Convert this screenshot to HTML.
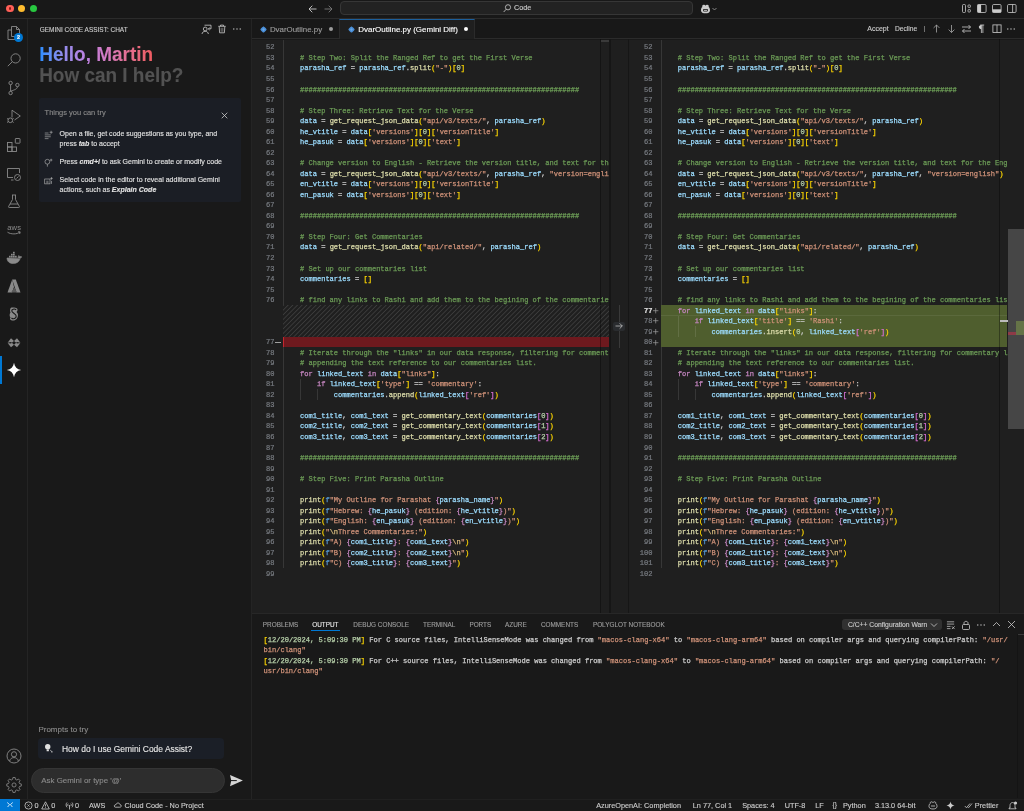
<!DOCTYPE html><html><head><meta charset="utf-8"><style>
*{box-sizing:border-box;margin:0;padding:0}
html,body{width:1024px;height:811px;overflow:hidden;background:#181818}
body{position:relative;font-family:"Liberation Sans",sans-serif;color:#cccccc}
.a{position:absolute}
.mono{font-family:"Liberation Mono",monospace}
.row{position:absolute;white-space:pre;-webkit-text-stroke-width:0.25px;font-family:"Liberation Mono",monospace;font-size:7.05px;line-height:10.53px;height:10.53px}
.ln{position:absolute;white-space:pre;-webkit-text-stroke-width:0.2px;font-family:"Liberation Mono",monospace;font-size:7.05px;line-height:10.53px;color:#6e7681;text-align:right}
.t{position:absolute;white-space:pre;line-height:1;-webkit-text-stroke-width:0.12px}
#root{position:absolute;left:0;top:0;width:1024px;height:811px;will-change:transform;background:#181818}
svg{position:absolute;overflow:visible}
</style></head><body><div id="root"><div class="a" style="left:0;top:0;width:1024px;height:19px;background:#181818;border-bottom:1px solid #2b2b2b"></div><div class="a" style="left:6.4px;top:5.1px;width:7.2px;height:7.2px;border-radius:50%;background:#ff5f57"></div><div class="a" style="left:18.099999999999998px;top:5.1px;width:7.2px;height:7.2px;border-radius:50%;background:#febc2e"></div><div class="a" style="left:29.9px;top:5.1px;width:7.2px;height:7.2px;border-radius:50%;background:#28c840"></div><div class="a" style="left:8.7px;top:7.4px;width:2.6px;height:2.6px;border-radius:50%;background:#8c1d18"></div><svg style="left:308px;top:4.5px" width="9" height="8" viewBox="0 0 9 8"><path d="M8.5 4H1M4.3 0.7L1 4l3.3 3.3" fill="none" stroke="#cccccc" stroke-width="0.9"/></svg><svg style="left:323.5px;top:4.5px" width="9" height="8" viewBox="0 0 9 8"><path d="M0.5 4H8M4.7 0.7L8 4 4.7 7.3" fill="none" stroke="#7a7a7a" stroke-width="0.9"/></svg><div class="a" style="left:340px;top:1.2px;width:352.5px;height:14px;border:1px solid #363636;border-radius:4px;background:#222222"></div><svg style="left:503px;top:3.8px" width="8" height="9" viewBox="0 0 8 9"><circle cx="5" cy="3.3" r="2.6" fill="none" stroke="#bbbbbb" stroke-width="0.9"/><path d="M3.2 5.2L0.7 8" stroke="#bbbbbb" stroke-width="0.9"/></svg><div class="t" style="left:514px;top:4.2px;font-size:7.2px;color:#cccccc">Code</div><svg style="left:699.5px;top:3.5px" width="11" height="10" viewBox="0 0 11 10"><path d="M1 6.5C1 4.5 1.5 3.5 2.3 3 2 1.5 2.8 0.6 4 0.8 4.8 0.9 5.3 1.3 5.5 1.8 5.7 1.3 6.2 0.9 7 0.8 8.2 0.6 9 1.5 8.7 3 9.5 3.5 10 4.5 10 6.5 10 8.5 8 9.3 5.5 9.3 3 9.3 1 8.5 1 6.5Z" fill="#cccccc"/><rect x="3" y="5" width="5" height="2.6" rx="1" fill="#181818"/><rect x="3.8" y="5.8" width="3.4" height="1" fill="#cccccc"/></svg><svg style="left:712px;top:6.5px" width="5" height="4" viewBox="0 0 5 4"><path d="M0.5 1L2.5 3 4.5 1" fill="none" stroke="#9d9d9d" stroke-width="0.8"/></svg><svg style="left:961.5px;top:4px" width="10" height="9" viewBox="0 0 10 9"><rect x="0.5" y="0.5" width="3" height="8" rx="1" fill="none" stroke="#cccccc" stroke-width="0.8"/><rect x="6" y="1" width="2.4" height="2.4" rx="0.6" fill="none" stroke="#cccccc" stroke-width="0.8"/><rect x="6" y="5.6" width="2.4" height="2.4" rx="0.6" fill="none" stroke="#cccccc" stroke-width="0.8"/></svg><svg style="left:976.5px;top:4px" width="10" height="9" viewBox="0 0 10 9"><rect x="0.5" y="0.5" width="8.6" height="8" rx="1.2" fill="none" stroke="#cccccc" stroke-width="0.8"/><rect x="0.5" y="0.5" width="3.6" height="8" fill="#cccccc"/></svg><svg style="left:991.8px;top:4px" width="10" height="9" viewBox="0 0 10 9"><rect x="0.5" y="0.5" width="8.6" height="8" rx="1.2" fill="none" stroke="#cccccc" stroke-width="0.8"/><rect x="0.5" y="5.3" width="8.6" height="3.2" fill="#cccccc"/></svg><svg style="left:1006.8px;top:4px" width="10" height="9" viewBox="0 0 10 9"><rect x="0.5" y="0.5" width="8.6" height="8" rx="1.2" fill="none" stroke="#cccccc" stroke-width="0.8"/><path d="M5.6 0.5V8.5" stroke="#cccccc" stroke-width="0.8"/></svg><div class="a" style="left:0;top:19px;width:28px;height:780px;background:#191919;border-right:1px solid #242424"></div><svg style="left:6.0px;top:25.0px" width="16" height="16" viewBox="0 0 16 16"><path d="M5.5 1.5H10.5L13.5 4.5V11.5H5.5Z" fill="none" stroke="#8a8a8a" stroke-width="0.9"/><path d="M10.5 1.5V4.5H13.5" fill="none" stroke="#8a8a8a" stroke-width="0.9"/><path d="M5.5 5H2V14.5H10V11.5" fill="none" stroke="#8a8a8a" stroke-width="0.9"/></svg><div class="a" style="left:14px;top:33px;width:9.4px;height:9.4px;border-radius:50%;background:#0078d4"></div><div class="t" style="left:17px;top:35.2px;font-size:5.5px;color:#fff;font-weight:700">2</div><svg style="left:6.0px;top:52.0px" width="16" height="16" viewBox="0 0 16 16"><circle cx="9.6" cy="6.4" r="4.6" fill="none" stroke="#8a8a8a" stroke-width="0.9"/><path d="M6.3 9.7L1.8 14.2" fill="none" stroke="#8a8a8a" stroke-width="0.9"/></svg><svg style="left:6.0px;top:80.0px" width="16" height="16" viewBox="0 0 16 16"><circle cx="4.6" cy="3" r="1.7" fill="none" stroke="#8a8a8a" stroke-width="0.9"/><circle cx="4.6" cy="13" r="1.7" fill="none" stroke="#8a8a8a" stroke-width="0.9"/><circle cx="11.4" cy="5" r="1.7" fill="none" stroke="#8a8a8a" stroke-width="0.9"/><path d="M4.6 4.7V11.3M11.4 6.7C11.4 9 9 9.6 4.6 11.3" fill="none" stroke="#8a8a8a" stroke-width="0.9"/></svg><svg style="left:6.0px;top:108.0px" width="16" height="16" viewBox="0 0 16 16"><path d="M6 9.5V2.2L14.3 8 8.5 12" fill="none" stroke="#8a8a8a" stroke-width="0.9"/><circle cx="4.3" cy="12.3" r="2.3" fill="none" stroke="#8a8a8a" stroke-width="0.9"/><path d="M1 10.5L2.4 11.3M1 14.5L2.4 13.5M7.6 10.5L6.2 11.3M7.6 14.5L6.2 13.5" fill="none" stroke="#8a8a8a" stroke-width="0.9"/></svg><svg style="left:6.0px;top:137.0px" width="16" height="16" viewBox="0 0 16 16"><rect x="1.5" y="5.5" width="4.5" height="4.5" fill="none" stroke="#8a8a8a" stroke-width="0.9"/><rect x="1.5" y="10" width="4.5" height="4.5" fill="none" stroke="#8a8a8a" stroke-width="0.9"/><rect x="6" y="10" width="4.5" height="4.5" fill="none" stroke="#8a8a8a" stroke-width="0.9"/><rect x="9.3" y="1.5" width="4.7" height="4.7" rx="0.5" fill="none" stroke="#8a8a8a" stroke-width="0.9"/></svg><svg style="left:6.0px;top:166.0px" width="16" height="16" viewBox="0 0 16 16"><path d="M13.5 7V2.5H1.5V11.5H7" fill="none" stroke="#8a8a8a" stroke-width="0.9"/><path d="M5 14H7.5" fill="none" stroke="#8a8a8a" stroke-width="0.9"/><circle cx="11.5" cy="11.5" r="3" fill="none" stroke="#8a8a8a" stroke-width="0.9"/><path d="M10.5 12.5L12.5 10.5" fill="none" stroke="#8a8a8a" stroke-width="0.9"/></svg><svg style="left:6.0px;top:193.0px" width="16" height="16" viewBox="0 0 16 16"><path d="M6 2H10M6.5 2V6.5L2.6 13.5C2.3 14 2.6 14.5 3.2 14.5H12.8C13.4 14.5 13.7 14 13.4 13.5L9.5 6.5V2" fill="none" stroke="#8a8a8a" stroke-width="0.9"/><path d="M4 11H12" fill="none" stroke="#8a8a8a" stroke-width="0.9"/></svg><div class="t" style="left:7.3px;top:223.6px;font-size:7.6px;color:#8a8a8a;letter-spacing:0.1px;-webkit-text-stroke-width:0">aws</div><svg style="left:6.0px;top:231.0px" width="16" height="4" viewBox="0 0 16 4"><path d="M1.5 1.2C5 3.5 11 3.5 14 1" fill="none" stroke="#8a8a8a" stroke-width="0.9"/><path d="M12 0.8L14.2 0.9 13.6 3" fill="none" stroke="#8a8a8a" stroke-width="0.9"/></svg><svg style="left:6.0px;top:250.0px" width="16" height="16" viewBox="0 0 16 16"><path d="M1 8H14.5C14.5 8 15.5 7.2 15.8 7 15 6.3 14 6.5 13.6 6.8 13.3 6 12.8 5.5 12.8 5.5L12.3 6.2C12.5 6.8 12.5 7.5 12.3 8M1 8C1 11.5 3.5 13.5 7.3 13.5 11 13.5 13.3 11.5 14.2 8.5" fill="#8a8a8a" stroke="#8a8a8a" stroke-width="0.6"/><rect x="3" y="5.8" width="1.7" height="1.7" fill="#8a8a8a"/><rect x="5" y="5.8" width="1.7" height="1.7" fill="#8a8a8a"/><rect x="7" y="5.8" width="1.7" height="1.7" fill="#8a8a8a"/><rect x="9" y="5.8" width="1.7" height="1.7" fill="#8a8a8a"/><rect x="5" y="3.8" width="1.7" height="1.7" fill="#8a8a8a"/><rect x="7" y="3.8" width="1.7" height="1.7" fill="#8a8a8a"/><rect x="7" y="1.8" width="1.7" height="1.7" fill="#8a8a8a"/></svg><svg style="left:6.0px;top:278.0px" width="16" height="16" viewBox="0 0 16 16"><path d="M6.2 1.5H9.8L14.5 14.5H10.5Z" fill="#8a8a8a"/><path d="M6.2 1.5L1.5 14.5H6L8 9Z" fill="#8a8a8a"/><path d="M8.5 9.5L11 14.5H5" fill="#5a5a5a"/></svg><svg style="left:6.0px;top:306.0px" width="16" height="16" viewBox="0 0 16 16"><path d="M5.5 1.5C7 1.2 10 1.5 11 2.5 12 3.5 11.5 5 10.5 6 12 7 12.5 9 11.5 11.5 10.5 14 8 14.8 6 14.5 4 14.2 3.5 12.5 4.5 11.5 3.5 10.5 3.2 8 4.5 6.5 3.8 5.3 3.8 2 5.5 1.5Z" fill="#8a8a8a"/><path d="M10.2 3.8C8.5 2.5 5.5 3 5.8 5 6.1 7 10 7.5 10.2 10 10.4 12.5 7 13.5 5.5 12" fill="none" stroke="#181818" stroke-width="1.1"/></svg><svg style="left:6.0px;top:334.5px" width="16" height="16" viewBox="0 0 16 16"><path d="M5 3.3L8 5.9 5 8.5 1.4 7.9Z M11 3.3L14.6 7.9 11 8.5 8 5.9Z M5 12.3L8 9.7 5 7.1 1.4 7.7Z M11 12.3L14.6 7.7 11 7.1 8 9.7Z" fill="#8a8a8a"/></svg><div class="a" style="left:0;top:356.4px;width:1.8px;height:27.7px;background:#0078d4"></div><svg style="left:6.0px;top:362.2px" width="16" height="16" viewBox="0 0 16 16"><path d="M8 0.8C8.6 5 11 7.4 15.2 8 11 8.6 8.6 11 8 15.2 7.4 11 5 8.6 0.8 8 5 7.4 7.4 5 8 0.8Z" fill="#ffffff"/></svg><svg style="left:6.0px;top:748.2px" width="16" height="16" viewBox="0 0 16 16"><circle cx="8" cy="8" r="7" fill="none" stroke="#8a8a8a" stroke-width="0.9"/><circle cx="8" cy="6.3" r="2.6" fill="none" stroke="#8a8a8a" stroke-width="0.9"/><path d="M3.6 13C4.3 10.5 6 9.6 8 9.6 10 9.6 11.7 10.5 12.4 13" fill="none" stroke="#8a8a8a" stroke-width="0.9"/></svg><svg style="left:6.0px;top:776.6px" width="16" height="16" viewBox="0 0 16 16"><g transform="translate(0.6 -0.4) scale(0.93)"><path d="M6.8 1H9.2L9.6 3 11 3.7 12.8 2.6 14.4 4.3 13.3 6 13.9 7.5 15.8 7.9V10.2L13.9 10.6 13.3 12.1 14.4 13.8 12.8 15.4 11 14.3 9.6 15 9.2 17H6.8L6.4 15 5 14.3 3.2 15.4 1.6 13.8 2.7 12.1 2.1 10.6 0.2 10.2V7.9L2.1 7.5 2.7 6 1.6 4.3 3.2 2.6 5 3.7 6.4 3Z" fill="none" stroke="#8a8a8a" stroke-width="0.9"/><circle cx="8" cy="9" r="2.2" fill="none" stroke="#8a8a8a" stroke-width="0.9"/></g></svg><div class="a" style="left:28px;top:19px;width:224px;height:780px;background:#191919;border-right:1px solid #242424"></div><div class="t" style="left:39.7px;top:26.6px;font-size:6.47px;color:#cccccc">GEMINI CODE ASSIST: CHAT</div><svg style="left:200px;top:23px" width="14" height="12" viewBox="200 23 14 12"><circle cx="205.2" cy="29" r="1.9" fill="none" stroke="#cccccc" stroke-width="0.8"/><path d="M202 34C202.3 32.2 203.5 31.3 205.2 31.3 206.9 31.3 208.1 32.2 208.4 34" fill="none" stroke="#cccccc" stroke-width="0.8"/><path d="M204.5 25.2H211V28.8H209" fill="none" stroke="#cccccc" stroke-width="0.8"/><path d="M209.6 27.7L208.2 28.9 209.6 30" fill="none" stroke="#cccccc" stroke-width="0.8"/></svg><svg style="left:217px;top:23px" width="10" height="12" viewBox="217 23 10 12"><path d="M218.3 26.3H225.7M220.5 26.2V25.1H223.5V26.2" fill="none" stroke="#cccccc" stroke-width="0.8"/><path d="M219.2 26.5L219.6 32.8H224.4L224.8 26.5" fill="none" stroke="#cccccc" stroke-width="0.8"/><path d="M221.2 27.8V31.8M222.8 27.8V31.8" stroke="#9a9a9a" stroke-width="0.7"/></svg><svg style="left:232.3px;top:28.2px" width="10" height="2" viewBox="0 0 10 2"><circle cx="1.8" cy="1" r="0.65" fill="#cccccc"/><circle cx="5" cy="1" r="0.65" fill="#cccccc"/><circle cx="8.2" cy="1" r="0.65" fill="#cccccc"/></svg><div class="t" style="left:39.2px;top:44.9px;font-size:19px;font-weight:700;background:linear-gradient(90deg,#2a8cff 0%,#5a90f8 9%,#8e8cec 20%,#b086e6 34%,#c47fdc 46%,#d57abf 60%,#e1729e 72%,#e86a80 85%,#f05a5e 100%);-webkit-background-clip:text;background-clip:text;color:transparent;width:115px;transform:scaleY(1.07);transform-origin:0 73%">Hello, Martin</div><div class="t" style="left:39.2px;top:66.6px;font-size:18.95px;font-weight:700;color:#525252;transform:scaleY(1.05);transform-origin:0 73%">How can I help?</div><div class="a" style="left:38.5px;top:98px;width:202.5px;height:103.6px;background:#1b1e25;border-radius:2px"></div><div class="t" style="left:44.6px;top:109px;font-size:7.48px;color:#8a8a8a">Things you can try</div><svg style="left:220.5px;top:112px" width="7" height="7" viewBox="0 0 7 7"><path d="M0.7 0.7L6.3 6.3M6.3 0.7L0.7 6.3" stroke="#cccccc" stroke-width="0.8"/></svg><div class="t" style="left:59.6px;top:129.8px;font-size:7.03px;color:#e2e2e2;transform:scaleY(1.14);transform-origin:0 73%">Open a file, get code suggestions as you type, and</div><div class="t" style="left:59.6px;top:140.4px;font-size:7.03px;color:#e2e2e2;transform:scaleY(1.14);transform-origin:0 73%">press <b><i>tab</i></b> to accept</div><div class="t" style="left:59.6px;top:157.8px;font-size:7.03px;color:#e2e2e2;transform:scaleY(1.14);transform-origin:0 73%">Press <b><i>cmd+i</i></b> to ask Gemini to create or modify code</div><div class="t" style="left:59.6px;top:175.5px;font-size:7.03px;color:#e2e2e2;transform:scaleY(1.14);transform-origin:0 73%">Select code in the editor to reveal additional Gemini</div><div class="t" style="left:59.6px;top:186.1px;font-size:7.03px;color:#e2e2e2;transform:scaleY(1.14);transform-origin:0 73%">actions, such as <b><i>Explain Code</i></b></div><svg style="left:44.2px;top:129.5px" width="9" height="9" viewBox="0 0 12 12"><path d="M1 4H6M1 6.5H9M1 9H9M1 11.5H6" fill="none" stroke="#bbbbbb" stroke-width="0.8"/><path d="M9.5 1V5M7.5 3H11.5" fill="none" stroke="#bbbbbb" stroke-width="0.8"/></svg><svg style="left:44.2px;top:157.5px" width="9" height="9" viewBox="0 0 12 12"><circle cx="4.5" cy="5" r="3.2" fill="none" stroke="#bbbbbb" stroke-width="0.8"/><path d="M4.5 8.2V11.5" fill="none" stroke="#bbbbbb" stroke-width="0.8"/><path d="M9.5 1V4.5M7.8 2.7H11.2" fill="none" stroke="#bbbbbb" stroke-width="0.8"/></svg><svg style="left:44.2px;top:175.5px" width="9" height="9" viewBox="0 0 12 12"><rect x="1" y="4" width="7" height="6.5" fill="none" stroke="#bbbbbb" stroke-width="0.8"/><path d="M3 7H6M3 9H6" fill="none" stroke="#bbbbbb" stroke-width="0.8"/><path d="M10 1.5V5M8.3 3.2H11.7M10 6.5V10.5" fill="none" stroke="#bbbbbb" stroke-width="0.8"/></svg><div class="t" style="left:38.4px;top:726.1px;font-size:8.03px;color:#8a8a8a">Prompts to try</div><div class="a" style="left:38.4px;top:738.4px;width:185.6px;height:20.9px;background:#1b1f27;border-radius:4px"></div><svg style="left:44.0px;top:743.1px" width="9" height="9" viewBox="0 0 12 12"><circle cx="5" cy="5" r="3.6" fill="#e0e0e0"/><path d="M3.5 8.5V11H6.5V8.5" fill="#e0e0e0"/><path d="M8 9L11 12M9.5 12H11.5" stroke="#e0e0e0" stroke-width="0.9"/></svg><div class="t" style="left:62px;top:744.9px;font-size:8.46px;color:#e6e6e6">How do I use Gemini Code Assist?</div><div class="a" style="left:31px;top:767.6px;width:193.8px;height:25.4px;background:#2d2d2d;border:1px solid #353535;border-radius:13px"></div><div class="t" style="left:41.3px;top:776.6px;font-size:7.92px;color:#8a8a8a">Ask Gemini or type '@'</div><svg style="left:228px;top:773px" width="16" height="15" viewBox="228 773 16 15"><path d="M230 775L242.9 780.6 230 786.3 231.3 780.6Z" fill="#d6d6d6"/><path d="M230.5 780.6H236.8" stroke="#191919" stroke-width="1"/></svg><div class="a" style="left:252px;top:19px;width:772px;height:20px;background:#181818;border-bottom:1px solid #2b2b2b"></div><div class="a" style="left:339px;top:19px;width:135.5px;height:20px;background:#1f1f1f;border-top:1px solid #1c5f9c;border-right:1px solid #2b2b2b;border-left:1px solid #2b2b2b"></div><svg style="left:259.5px;top:25.5px" width="7" height="7" viewBox="0 0 7 7"><path d="M3.5 0.4C4.2 0.4 6.6 2.8 6.6 3.5 6.6 4.2 4.2 6.6 3.5 6.6 2.8 6.6 0.4 4.2 0.4 3.5 0.4 2.8 2.8 0.4 3.5 0.4Z" fill="#4a8fd8"/><path d="M2.2 3.6H4.8M3.5 2.3V4.9" stroke="#6aa8e8" stroke-width="0.9"/></svg><div class="t" style="left:269.9px;top:25.8px;font-size:7.9px;color:#9d9d9d">DvarOutline.py</div><div class="a" style="left:328.6px;top:26.8px;width:4.6px;height:4.6px;border-radius:50%;background:#9d9d9d"></div><svg style="left:347.5px;top:25.5px" width="7" height="7" viewBox="0 0 7 7"><path d="M3.5 0.4C4.2 0.4 6.6 2.8 6.6 3.5 6.6 4.2 4.2 6.6 3.5 6.6 2.8 6.6 0.4 4.2 0.4 3.5 0.4 2.8 2.8 0.4 3.5 0.4Z" fill="#4a8fd8"/><path d="M2.2 3.6H4.8M3.5 2.3V4.9" stroke="#6aa8e8" stroke-width="0.9"/></svg><div class="t" style="left:358.3px;top:25.8px;font-size:7.98px;color:#ffffff">DvarOutline.py (Gemini Diff)</div><div class="a" style="left:463.7px;top:26.8px;width:4.6px;height:4.6px;border-radius:50%;background:#ffffff"></div><div class="t" style="left:867.2px;top:24.9px;font-size:7.06px;color:#cccccc">Accept</div><div class="t" style="left:894.9px;top:25.5px;font-size:6.7px;color:#cccccc">Decline</div><div class="a" style="left:923.7px;top:26.3px;width:1px;height:5.8px;background:#707070"></div><svg style="left:931.5px;top:24.2px" width="9" height="10" viewBox="0 0 9 10"><path d="M4.5 8.5V1M1.6 3.9L4.5 1 7.4 3.9" fill="none" stroke="#a8a8a8" stroke-width="0.8"/></svg><svg style="left:946.7px;top:24.2px" width="9" height="10" viewBox="0 0 9 10"><path d="M4.5 1V8.5M1.6 5.6L4.5 8.5 7.4 5.6" fill="none" stroke="#a8a8a8" stroke-width="0.8"/></svg><svg style="left:960.5px;top:24.2px" width="11" height="10" viewBox="0 0 11 10"><path d="M1 3H9.5M7.5 1L9.5 3 7.5 5M10 7H1.5M3.5 5L1.5 7 3.5 9" fill="none" stroke="#cccccc" stroke-width="0.8"/></svg><svg style="left:975.8px;top:24.0px" width="9" height="10" viewBox="0 0 9 10"><path d="M4.2 1H8.2M5.4 1V9M6.9 1V9" fill="none" stroke="#cccccc" stroke-width="0.8"/><path d="M5.4 1C2 1 2 5.2 5.4 5.2Z" fill="#cccccc"/></svg><svg style="left:992.0px;top:24.3px" width="10" height="9.4" viewBox="0 0 10 9.4"><rect x="0.9" y="0.9" width="8.2" height="7.6" fill="none" stroke="#cccccc" stroke-width="0.8"/><path d="M5 0.9V8.5" stroke="#cccccc" stroke-width="0.8"/></svg><svg style="left:1006.3px;top:28.4px" width="10" height="2" viewBox="0 0 10 2"><circle cx="1.8" cy="1" r="0.65" fill="#cccccc"/><circle cx="5" cy="1" r="0.65" fill="#cccccc"/><circle cx="8.2" cy="1" r="0.65" fill="#cccccc"/></svg><div class="a" style="left:252px;top:39px;width:772px;height:574px;background:#1f1f1f"></div><div class="a" style="left:252px;top:39px;width:357.20000000000005px;height:574px;overflow:hidden"><svg style="left:31.100000000000023px;top:265.75px" width="326.10" height="31.89"><defs><pattern id="hp" width="3.3" height="3.3" patternUnits="userSpaceOnUse" patternTransform="rotate(45)"><rect width="0.85" height="3.3" fill="#3d3d3d"/></pattern></defs><rect width="326.10" height="31.89" fill="url(#hp)"/></svg><div class="a" style="left:31.100000000000023px;top:297.64px;width:326.1px;height:10.58px;background:#6e191e;border-left:1px solid #c4262e"></div><div class="a" style="left:31.30px;top:-0.36px;width:0.8px;height:266.41px;background:rgba(255,255,255,0.11)"></div><div class="a" style="left:31.30px;top:308.17px;width:0.8px;height:221.13px;background:rgba(255,255,255,0.11)"></div><div class="a" style="left:48.20px;top:339.76px;width:0.8px;height:21.06px;background:rgba(255,255,255,0.11)"></div><div class="a" style="left:65.10px;top:350.29px;width:0.8px;height:10.53px;background:rgba(255,255,255,0.11)"></div><div class="ln" style="left:-7.5px;top:3.40px;width:30px;color:#787c82;">52</div><div class="ln" style="left:-7.5px;top:13.93px;width:30px;color:#787c82;">53</div><div class="row" style="left:31.100000000000023px;top:13.93px;width:325.80px;overflow:hidden;">    <span style="color:#6A9955"># Step Two: Split the Ranged Ref to get the First Verse</span></div><div class="ln" style="left:-7.5px;top:24.46px;width:30px;color:#787c82;">54</div><div class="row" style="left:31.100000000000023px;top:24.46px;width:325.80px;overflow:hidden;">    <span style="color:#9CDCFE">parasha_ref</span> <span style="color:#CCCCCC">=</span> <span style="color:#9CDCFE">parasha_ref</span><span style="color:#CCCCCC">.</span><span style="color:#DCDCAA">split</span><span style="color:#FFD700">(</span><span style="color:#CE9178">&quot;-&quot;</span><span style="color:#FFD700">)</span><span style="color:#FFD700">[</span><span style="color:#B5CEA8">0</span><span style="color:#FFD700">]</span></div><div class="ln" style="left:-7.5px;top:34.99px;width:30px;color:#787c82;">55</div><div class="ln" style="left:-7.5px;top:45.52px;width:30px;color:#787c82;">56</div><div class="row" style="left:31.100000000000023px;top:45.52px;width:325.80px;overflow:hidden;">    <span style="color:#6A9955">##################################################################</span></div><div class="ln" style="left:-7.5px;top:56.05px;width:30px;color:#787c82;">57</div><div class="ln" style="left:-7.5px;top:66.58px;width:30px;color:#787c82;">58</div><div class="row" style="left:31.100000000000023px;top:66.58px;width:325.80px;overflow:hidden;">    <span style="color:#6A9955"># Step Three: Retrieve Text for the Verse</span></div><div class="ln" style="left:-7.5px;top:77.11px;width:30px;color:#787c82;">59</div><div class="row" style="left:31.100000000000023px;top:77.11px;width:325.80px;overflow:hidden;">    <span style="color:#9CDCFE">data</span> <span style="color:#CCCCCC">=</span> <span style="color:#DCDCAA">get_request_json_data</span><span style="color:#FFD700">(</span><span style="color:#CE9178">&quot;api/v3/texts/&quot;</span><span style="color:#CCCCCC">,</span> <span style="color:#9CDCFE">parasha_ref</span><span style="color:#FFD700">)</span></div><div class="ln" style="left:-7.5px;top:87.64px;width:30px;color:#787c82;">60</div><div class="row" style="left:31.100000000000023px;top:87.64px;width:325.80px;overflow:hidden;">    <span style="color:#9CDCFE">he_vtitle</span> <span style="color:#CCCCCC">=</span> <span style="color:#9CDCFE">data</span><span style="color:#FFD700">[</span><span style="color:#CE9178">&#x27;versions&#x27;</span><span style="color:#FFD700">]</span><span style="color:#FFD700">[</span><span style="color:#B5CEA8">0</span><span style="color:#FFD700">]</span><span style="color:#FFD700">[</span><span style="color:#CE9178">&#x27;versionTitle&#x27;</span><span style="color:#FFD700">]</span></div><div class="ln" style="left:-7.5px;top:98.17px;width:30px;color:#787c82;">61</div><div class="row" style="left:31.100000000000023px;top:98.17px;width:325.80px;overflow:hidden;">    <span style="color:#9CDCFE">he_pasuk</span> <span style="color:#CCCCCC">=</span> <span style="color:#9CDCFE">data</span><span style="color:#FFD700">[</span><span style="color:#CE9178">&#x27;versions&#x27;</span><span style="color:#FFD700">]</span><span style="color:#FFD700">[</span><span style="color:#B5CEA8">0</span><span style="color:#FFD700">]</span><span style="color:#FFD700">[</span><span style="color:#CE9178">&#x27;text&#x27;</span><span style="color:#FFD700">]</span></div><div class="ln" style="left:-7.5px;top:108.70px;width:30px;color:#787c82;">62</div><div class="ln" style="left:-7.5px;top:119.23px;width:30px;color:#787c82;">63</div><div class="row" style="left:31.100000000000023px;top:119.23px;width:325.80px;overflow:hidden;">    <span style="color:#6A9955"># Change version to English - Retrieve the version title, and text for the English version</span></div><div class="ln" style="left:-7.5px;top:129.76px;width:30px;color:#787c82;">64</div><div class="row" style="left:31.100000000000023px;top:129.76px;width:325.80px;overflow:hidden;">    <span style="color:#9CDCFE">data</span> <span style="color:#CCCCCC">=</span> <span style="color:#DCDCAA">get_request_json_data</span><span style="color:#FFD700">(</span><span style="color:#CE9178">&quot;api/v3/texts/&quot;</span><span style="color:#CCCCCC">,</span> <span style="color:#9CDCFE">parasha_ref</span><span style="color:#CCCCCC">,</span> <span style="color:#CE9178">&quot;version=english&quot;</span><span style="color:#FFD700">)</span></div><div class="ln" style="left:-7.5px;top:140.29px;width:30px;color:#787c82;">65</div><div class="row" style="left:31.100000000000023px;top:140.29px;width:325.80px;overflow:hidden;">    <span style="color:#9CDCFE">en_vtitle</span> <span style="color:#CCCCCC">=</span> <span style="color:#9CDCFE">data</span><span style="color:#FFD700">[</span><span style="color:#CE9178">&#x27;versions&#x27;</span><span style="color:#FFD700">]</span><span style="color:#FFD700">[</span><span style="color:#B5CEA8">0</span><span style="color:#FFD700">]</span><span style="color:#FFD700">[</span><span style="color:#CE9178">&#x27;versionTitle&#x27;</span><span style="color:#FFD700">]</span></div><div class="ln" style="left:-7.5px;top:150.82px;width:30px;color:#787c82;">66</div><div class="row" style="left:31.100000000000023px;top:150.82px;width:325.80px;overflow:hidden;">    <span style="color:#9CDCFE">en_pasuk</span> <span style="color:#CCCCCC">=</span> <span style="color:#9CDCFE">data</span><span style="color:#FFD700">[</span><span style="color:#CE9178">&#x27;versions&#x27;</span><span style="color:#FFD700">]</span><span style="color:#FFD700">[</span><span style="color:#B5CEA8">0</span><span style="color:#FFD700">]</span><span style="color:#FFD700">[</span><span style="color:#CE9178">&#x27;text&#x27;</span><span style="color:#FFD700">]</span></div><div class="ln" style="left:-7.5px;top:161.35px;width:30px;color:#787c82;">67</div><div class="ln" style="left:-7.5px;top:171.88px;width:30px;color:#787c82;">68</div><div class="row" style="left:31.100000000000023px;top:171.88px;width:325.80px;overflow:hidden;">    <span style="color:#6A9955">##################################################################</span></div><div class="ln" style="left:-7.5px;top:182.41px;width:30px;color:#787c82;">69</div><div class="ln" style="left:-7.5px;top:192.94px;width:30px;color:#787c82;">70</div><div class="row" style="left:31.100000000000023px;top:192.94px;width:325.80px;overflow:hidden;">    <span style="color:#6A9955"># Step Four: Get Commentaries</span></div><div class="ln" style="left:-7.5px;top:203.47px;width:30px;color:#787c82;">71</div><div class="row" style="left:31.100000000000023px;top:203.47px;width:325.80px;overflow:hidden;">    <span style="color:#9CDCFE">data</span> <span style="color:#CCCCCC">=</span> <span style="color:#DCDCAA">get_request_json_data</span><span style="color:#FFD700">(</span><span style="color:#CE9178">&quot;api/related/&quot;</span><span style="color:#CCCCCC">,</span> <span style="color:#9CDCFE">parasha_ref</span><span style="color:#FFD700">)</span></div><div class="ln" style="left:-7.5px;top:214.00px;width:30px;color:#787c82;">72</div><div class="ln" style="left:-7.5px;top:224.53px;width:30px;color:#787c82;">73</div><div class="row" style="left:31.100000000000023px;top:224.53px;width:325.80px;overflow:hidden;">    <span style="color:#6A9955"># Set up our commentaries list</span></div><div class="ln" style="left:-7.5px;top:235.06px;width:30px;color:#787c82;">74</div><div class="row" style="left:31.100000000000023px;top:235.06px;width:325.80px;overflow:hidden;">    <span style="color:#9CDCFE">commentaries</span> <span style="color:#CCCCCC">=</span> <span style="color:#FFD700">[</span><span style="color:#FFD700">]</span></div><div class="ln" style="left:-7.5px;top:245.59px;width:30px;color:#787c82;">75</div><div class="ln" style="left:-7.5px;top:256.12px;width:30px;color:#787c82;">76</div><div class="row" style="left:31.100000000000023px;top:256.12px;width:325.80px;overflow:hidden;">    <span style="color:#6A9955"># find any links to Rashi and add them to the begining of the commentaries list</span></div><div class="ln" style="left:-7.5px;top:298.24px;width:30px;color:#787c82;">77</div><div class="a" style="left:23.3px;top:302.94px;width:5.8px;height:0.8px;background:#a0a0a0"></div><div class="ln" style="left:-7.5px;top:308.77px;width:30px;color:#787c82;">78</div><div class="row" style="left:31.100000000000023px;top:308.77px;width:325.80px;overflow:hidden;">    <span style="color:#6A9955"># Iterate through the &quot;links&quot; in our data response, filtering for commentary links and</span></div><div class="ln" style="left:-7.5px;top:319.30px;width:30px;color:#787c82;">79</div><div class="row" style="left:31.100000000000023px;top:319.30px;width:325.80px;overflow:hidden;">    <span style="color:#6A9955"># appending the text reference to our commentaries list.</span></div><div class="ln" style="left:-7.5px;top:329.83px;width:30px;color:#787c82;">80</div><div class="row" style="left:31.100000000000023px;top:329.83px;width:325.80px;overflow:hidden;">    <span style="color:#C586C0">for</span> <span style="color:#9CDCFE">linked_text</span> <span style="color:#C586C0">in</span> <span style="color:#9CDCFE">data</span><span style="color:#FFD700">[</span><span style="color:#CE9178">&quot;links&quot;</span><span style="color:#FFD700">]</span><span style="color:#CCCCCC">:</span></div><div class="ln" style="left:-7.5px;top:340.36px;width:30px;color:#787c82;">81</div><div class="row" style="left:31.100000000000023px;top:340.36px;width:325.80px;overflow:hidden;">        <span style="color:#C586C0">if</span> <span style="color:#9CDCFE">linked_text</span><span style="color:#FFD700">[</span><span style="color:#CE9178">&#x27;type&#x27;</span><span style="color:#FFD700">]</span> <span style="color:#CCCCCC">=</span><span style="color:#CCCCCC">=</span> <span style="color:#CE9178">&#x27;commentary&#x27;</span><span style="color:#CCCCCC">:</span></div><div class="ln" style="left:-7.5px;top:350.89px;width:30px;color:#787c82;">82</div><div class="row" style="left:31.100000000000023px;top:350.89px;width:325.80px;overflow:hidden;">            <span style="color:#9CDCFE">commentaries</span><span style="color:#CCCCCC">.</span><span style="color:#DCDCAA">append</span><span style="color:#FFD700">(</span><span style="color:#9CDCFE">linked_text</span><span style="color:#DA70D6">[</span><span style="color:#CE9178">&#x27;ref&#x27;</span><span style="color:#DA70D6">]</span><span style="color:#FFD700">)</span></div><div class="ln" style="left:-7.5px;top:361.42px;width:30px;color:#787c82;">83</div><div class="ln" style="left:-7.5px;top:371.95px;width:30px;color:#787c82;">84</div><div class="row" style="left:31.100000000000023px;top:371.95px;width:325.80px;overflow:hidden;">    <span style="color:#9CDCFE">com1_title</span><span style="color:#CCCCCC">,</span> <span style="color:#9CDCFE">com1_text</span> <span style="color:#CCCCCC">=</span> <span style="color:#DCDCAA">get_commentary_text</span><span style="color:#FFD700">(</span><span style="color:#9CDCFE">commentaries</span><span style="color:#DA70D6">[</span><span style="color:#B5CEA8">0</span><span style="color:#DA70D6">]</span><span style="color:#FFD700">)</span></div><div class="ln" style="left:-7.5px;top:382.48px;width:30px;color:#787c82;">85</div><div class="row" style="left:31.100000000000023px;top:382.48px;width:325.80px;overflow:hidden;">    <span style="color:#9CDCFE">com2_title</span><span style="color:#CCCCCC">,</span> <span style="color:#9CDCFE">com2_text</span> <span style="color:#CCCCCC">=</span> <span style="color:#DCDCAA">get_commentary_text</span><span style="color:#FFD700">(</span><span style="color:#9CDCFE">commentaries</span><span style="color:#DA70D6">[</span><span style="color:#B5CEA8">1</span><span style="color:#DA70D6">]</span><span style="color:#FFD700">)</span></div><div class="ln" style="left:-7.5px;top:393.01px;width:30px;color:#787c82;">86</div><div class="row" style="left:31.100000000000023px;top:393.01px;width:325.80px;overflow:hidden;">    <span style="color:#9CDCFE">com3_title</span><span style="color:#CCCCCC">,</span> <span style="color:#9CDCFE">com3_text</span> <span style="color:#CCCCCC">=</span> <span style="color:#DCDCAA">get_commentary_text</span><span style="color:#FFD700">(</span><span style="color:#9CDCFE">commentaries</span><span style="color:#DA70D6">[</span><span style="color:#B5CEA8">2</span><span style="color:#DA70D6">]</span><span style="color:#FFD700">)</span></div><div class="ln" style="left:-7.5px;top:403.54px;width:30px;color:#787c82;">87</div><div class="ln" style="left:-7.5px;top:414.07px;width:30px;color:#787c82;">88</div><div class="row" style="left:31.100000000000023px;top:414.07px;width:325.80px;overflow:hidden;">    <span style="color:#6A9955">##################################################################</span></div><div class="ln" style="left:-7.5px;top:424.60px;width:30px;color:#787c82;">89</div><div class="ln" style="left:-7.5px;top:435.13px;width:30px;color:#787c82;">90</div><div class="row" style="left:31.100000000000023px;top:435.13px;width:325.80px;overflow:hidden;">    <span style="color:#6A9955"># Step Five: Print Parasha Outline</span></div><div class="ln" style="left:-7.5px;top:445.66px;width:30px;color:#787c82;">91</div><div class="ln" style="left:-7.5px;top:456.19px;width:30px;color:#787c82;">92</div><div class="row" style="left:31.100000000000023px;top:456.19px;width:325.80px;overflow:hidden;">    <span style="color:#DCDCAA">print</span><span style="color:#FFD700">(</span><span style="color:#569CD6">f</span><span style="color:#CE9178">&quot;My Outline for Parashat </span><span style="color:#C586C0">{</span><span style="color:#9CDCFE">parasha_name</span><span style="color:#C586C0">}</span><span style="color:#CE9178">&quot;</span><span style="color:#FFD700">)</span></div><div class="ln" style="left:-7.5px;top:466.72px;width:30px;color:#787c82;">93</div><div class="row" style="left:31.100000000000023px;top:466.72px;width:325.80px;overflow:hidden;">    <span style="color:#DCDCAA">print</span><span style="color:#FFD700">(</span><span style="color:#569CD6">f</span><span style="color:#CE9178">&quot;Hebrew: </span><span style="color:#C586C0">{</span><span style="color:#9CDCFE">he_pasuk</span><span style="color:#C586C0">}</span><span style="color:#CE9178"> (edition: </span><span style="color:#C586C0">{</span><span style="color:#9CDCFE">he_vtitle</span><span style="color:#C586C0">}</span><span style="color:#CE9178">)&quot;</span><span style="color:#FFD700">)</span></div><div class="ln" style="left:-7.5px;top:477.25px;width:30px;color:#787c82;">94</div><div class="row" style="left:31.100000000000023px;top:477.25px;width:325.80px;overflow:hidden;">    <span style="color:#DCDCAA">print</span><span style="color:#FFD700">(</span><span style="color:#569CD6">f</span><span style="color:#CE9178">&quot;English: </span><span style="color:#C586C0">{</span><span style="color:#9CDCFE">en_pasuk</span><span style="color:#C586C0">}</span><span style="color:#CE9178"> (edition: </span><span style="color:#C586C0">{</span><span style="color:#9CDCFE">en_vtitle</span><span style="color:#C586C0">}</span><span style="color:#CE9178">)&quot;</span><span style="color:#FFD700">)</span></div><div class="ln" style="left:-7.5px;top:487.78px;width:30px;color:#787c82;">95</div><div class="row" style="left:31.100000000000023px;top:487.78px;width:325.80px;overflow:hidden;">    <span style="color:#DCDCAA">print</span><span style="color:#FFD700">(</span><span style="color:#CE9178">&quot;</span><span style="color:#D7BA7D">\n</span><span style="color:#CE9178">Three Commentaries:&quot;</span><span style="color:#FFD700">)</span></div><div class="ln" style="left:-7.5px;top:498.31px;width:30px;color:#787c82;">96</div><div class="row" style="left:31.100000000000023px;top:498.31px;width:325.80px;overflow:hidden;">    <span style="color:#DCDCAA">print</span><span style="color:#FFD700">(</span><span style="color:#569CD6">f</span><span style="color:#CE9178">&quot;A) </span><span style="color:#C586C0">{</span><span style="color:#9CDCFE">com1_title</span><span style="color:#C586C0">}</span><span style="color:#CE9178">: </span><span style="color:#C586C0">{</span><span style="color:#9CDCFE">com1_text</span><span style="color:#C586C0">}</span><span style="color:#D7BA7D">\n</span><span style="color:#CE9178">&quot;</span><span style="color:#FFD700">)</span></div><div class="ln" style="left:-7.5px;top:508.84px;width:30px;color:#787c82;">97</div><div class="row" style="left:31.100000000000023px;top:508.84px;width:325.80px;overflow:hidden;">    <span style="color:#DCDCAA">print</span><span style="color:#FFD700">(</span><span style="color:#569CD6">f</span><span style="color:#CE9178">&quot;B) </span><span style="color:#C586C0">{</span><span style="color:#9CDCFE">com2_title</span><span style="color:#C586C0">}</span><span style="color:#CE9178">: </span><span style="color:#C586C0">{</span><span style="color:#9CDCFE">com2_text</span><span style="color:#C586C0">}</span><span style="color:#D7BA7D">\n</span><span style="color:#CE9178">&quot;</span><span style="color:#FFD700">)</span></div><div class="ln" style="left:-7.5px;top:519.37px;width:30px;color:#787c82;">98</div><div class="row" style="left:31.100000000000023px;top:519.37px;width:325.80px;overflow:hidden;">    <span style="color:#DCDCAA">print</span><span style="color:#FFD700">(</span><span style="color:#569CD6">f</span><span style="color:#CE9178">&quot;C) </span><span style="color:#C586C0">{</span><span style="color:#9CDCFE">com3_title</span><span style="color:#C586C0">}</span><span style="color:#CE9178">: </span><span style="color:#C586C0">{</span><span style="color:#9CDCFE">com3_text</span><span style="color:#C586C0">}</span><span style="color:#CE9178">&quot;</span><span style="color:#FFD700">)</span></div><div class="ln" style="left:-7.5px;top:529.90px;width:30px;color:#787c82;">99</div></div><div class="a" style="left:629px;top:39px;width:378.5px;height:574px;overflow:hidden"><div class="a" style="left:31.799999999999955px;top:266.05px;width:346.70000000000005px;height:10.58px;background:#4f5e2e"></div><div class="a" style="left:31.799999999999955px;top:276.58px;width:346.70000000000005px;height:10.58px;background:#4f5e2e"></div><div class="a" style="left:31.799999999999955px;top:287.11px;width:346.70000000000005px;height:10.58px;background:#4f5e2e"></div><div class="a" style="left:31.799999999999955px;top:297.64px;width:346.70000000000005px;height:10.58px;background:#4f5e2e"></div><div class="a" style="left:31.799999999999955px;top:276.08px;width:346.70000000000005px;height:0.8px;background:rgba(255,255,255,0.07)"></div><div class="a" style="left:32.20px;top:-0.36px;width:0.8px;height:266.41px;background:rgba(255,255,255,0.11)"></div><div class="a" style="left:32.20px;top:308.17px;width:0.8px;height:221.13px;background:rgba(255,255,255,0.11)"></div><div class="a" style="left:49.10px;top:276.58px;width:0.8px;height:21.06px;background:rgba(255,255,255,0.11)"></div><div class="a" style="left:66.00px;top:287.11px;width:0.8px;height:10.53px;background:rgba(255,255,255,0.11)"></div><div class="a" style="left:49.10px;top:339.76px;width:0.8px;height:21.06px;background:rgba(255,255,255,0.11)"></div><div class="a" style="left:66.00px;top:350.29px;width:0.8px;height:10.53px;background:rgba(255,255,255,0.11)"></div><div class="ln" style="left:-6.5px;top:3.40px;width:30px;color:#787c82;">52</div><div class="ln" style="left:-6.5px;top:13.93px;width:30px;color:#787c82;">53</div><div class="row" style="left:31.799999999999955px;top:13.93px;">    <span style="color:#6A9955"># Step Two: Split the Ranged Ref to get the First Verse</span></div><div class="ln" style="left:-6.5px;top:24.46px;width:30px;color:#787c82;">54</div><div class="row" style="left:31.799999999999955px;top:24.46px;">    <span style="color:#9CDCFE">parasha_ref</span> <span style="color:#CCCCCC">=</span> <span style="color:#9CDCFE">parasha_ref</span><span style="color:#CCCCCC">.</span><span style="color:#DCDCAA">split</span><span style="color:#FFD700">(</span><span style="color:#CE9178">&quot;-&quot;</span><span style="color:#FFD700">)</span><span style="color:#FFD700">[</span><span style="color:#B5CEA8">0</span><span style="color:#FFD700">]</span></div><div class="ln" style="left:-6.5px;top:34.99px;width:30px;color:#787c82;">55</div><div class="ln" style="left:-6.5px;top:45.52px;width:30px;color:#787c82;">56</div><div class="row" style="left:31.799999999999955px;top:45.52px;">    <span style="color:#6A9955">##################################################################</span></div><div class="ln" style="left:-6.5px;top:56.05px;width:30px;color:#787c82;">57</div><div class="ln" style="left:-6.5px;top:66.58px;width:30px;color:#787c82;">58</div><div class="row" style="left:31.799999999999955px;top:66.58px;">    <span style="color:#6A9955"># Step Three: Retrieve Text for the Verse</span></div><div class="ln" style="left:-6.5px;top:77.11px;width:30px;color:#787c82;">59</div><div class="row" style="left:31.799999999999955px;top:77.11px;">    <span style="color:#9CDCFE">data</span> <span style="color:#CCCCCC">=</span> <span style="color:#DCDCAA">get_request_json_data</span><span style="color:#FFD700">(</span><span style="color:#CE9178">&quot;api/v3/texts/&quot;</span><span style="color:#CCCCCC">,</span> <span style="color:#9CDCFE">parasha_ref</span><span style="color:#FFD700">)</span></div><div class="ln" style="left:-6.5px;top:87.64px;width:30px;color:#787c82;">60</div><div class="row" style="left:31.799999999999955px;top:87.64px;">    <span style="color:#9CDCFE">he_vtitle</span> <span style="color:#CCCCCC">=</span> <span style="color:#9CDCFE">data</span><span style="color:#FFD700">[</span><span style="color:#CE9178">&#x27;versions&#x27;</span><span style="color:#FFD700">]</span><span style="color:#FFD700">[</span><span style="color:#B5CEA8">0</span><span style="color:#FFD700">]</span><span style="color:#FFD700">[</span><span style="color:#CE9178">&#x27;versionTitle&#x27;</span><span style="color:#FFD700">]</span></div><div class="ln" style="left:-6.5px;top:98.17px;width:30px;color:#787c82;">61</div><div class="row" style="left:31.799999999999955px;top:98.17px;">    <span style="color:#9CDCFE">he_pasuk</span> <span style="color:#CCCCCC">=</span> <span style="color:#9CDCFE">data</span><span style="color:#FFD700">[</span><span style="color:#CE9178">&#x27;versions&#x27;</span><span style="color:#FFD700">]</span><span style="color:#FFD700">[</span><span style="color:#B5CEA8">0</span><span style="color:#FFD700">]</span><span style="color:#FFD700">[</span><span style="color:#CE9178">&#x27;text&#x27;</span><span style="color:#FFD700">]</span></div><div class="ln" style="left:-6.5px;top:108.70px;width:30px;color:#787c82;">62</div><div class="ln" style="left:-6.5px;top:119.23px;width:30px;color:#787c82;">63</div><div class="row" style="left:31.799999999999955px;top:119.23px;">    <span style="color:#6A9955"># Change version to English - Retrieve the version title, and text for the English version</span></div><div class="ln" style="left:-6.5px;top:129.76px;width:30px;color:#787c82;">64</div><div class="row" style="left:31.799999999999955px;top:129.76px;">    <span style="color:#9CDCFE">data</span> <span style="color:#CCCCCC">=</span> <span style="color:#DCDCAA">get_request_json_data</span><span style="color:#FFD700">(</span><span style="color:#CE9178">&quot;api/v3/texts/&quot;</span><span style="color:#CCCCCC">,</span> <span style="color:#9CDCFE">parasha_ref</span><span style="color:#CCCCCC">,</span> <span style="color:#CE9178">&quot;version=english&quot;</span><span style="color:#FFD700">)</span></div><div class="ln" style="left:-6.5px;top:140.29px;width:30px;color:#787c82;">65</div><div class="row" style="left:31.799999999999955px;top:140.29px;">    <span style="color:#9CDCFE">en_vtitle</span> <span style="color:#CCCCCC">=</span> <span style="color:#9CDCFE">data</span><span style="color:#FFD700">[</span><span style="color:#CE9178">&#x27;versions&#x27;</span><span style="color:#FFD700">]</span><span style="color:#FFD700">[</span><span style="color:#B5CEA8">0</span><span style="color:#FFD700">]</span><span style="color:#FFD700">[</span><span style="color:#CE9178">&#x27;versionTitle&#x27;</span><span style="color:#FFD700">]</span></div><div class="ln" style="left:-6.5px;top:150.82px;width:30px;color:#787c82;">66</div><div class="row" style="left:31.799999999999955px;top:150.82px;">    <span style="color:#9CDCFE">en_pasuk</span> <span style="color:#CCCCCC">=</span> <span style="color:#9CDCFE">data</span><span style="color:#FFD700">[</span><span style="color:#CE9178">&#x27;versions&#x27;</span><span style="color:#FFD700">]</span><span style="color:#FFD700">[</span><span style="color:#B5CEA8">0</span><span style="color:#FFD700">]</span><span style="color:#FFD700">[</span><span style="color:#CE9178">&#x27;text&#x27;</span><span style="color:#FFD700">]</span></div><div class="ln" style="left:-6.5px;top:161.35px;width:30px;color:#787c82;">67</div><div class="ln" style="left:-6.5px;top:171.88px;width:30px;color:#787c82;">68</div><div class="row" style="left:31.799999999999955px;top:171.88px;">    <span style="color:#6A9955">##################################################################</span></div><div class="ln" style="left:-6.5px;top:182.41px;width:30px;color:#787c82;">69</div><div class="ln" style="left:-6.5px;top:192.94px;width:30px;color:#787c82;">70</div><div class="row" style="left:31.799999999999955px;top:192.94px;">    <span style="color:#6A9955"># Step Four: Get Commentaries</span></div><div class="ln" style="left:-6.5px;top:203.47px;width:30px;color:#787c82;">71</div><div class="row" style="left:31.799999999999955px;top:203.47px;">    <span style="color:#9CDCFE">data</span> <span style="color:#CCCCCC">=</span> <span style="color:#DCDCAA">get_request_json_data</span><span style="color:#FFD700">(</span><span style="color:#CE9178">&quot;api/related/&quot;</span><span style="color:#CCCCCC">,</span> <span style="color:#9CDCFE">parasha_ref</span><span style="color:#FFD700">)</span></div><div class="ln" style="left:-6.5px;top:214.00px;width:30px;color:#787c82;">72</div><div class="ln" style="left:-6.5px;top:224.53px;width:30px;color:#787c82;">73</div><div class="row" style="left:31.799999999999955px;top:224.53px;">    <span style="color:#6A9955"># Set up our commentaries list</span></div><div class="ln" style="left:-6.5px;top:235.06px;width:30px;color:#787c82;">74</div><div class="row" style="left:31.799999999999955px;top:235.06px;">    <span style="color:#9CDCFE">commentaries</span> <span style="color:#CCCCCC">=</span> <span style="color:#FFD700">[</span><span style="color:#FFD700">]</span></div><div class="ln" style="left:-6.5px;top:245.59px;width:30px;color:#787c82;">75</div><div class="ln" style="left:-6.5px;top:256.12px;width:30px;color:#787c82;">76</div><div class="row" style="left:31.799999999999955px;top:256.12px;">    <span style="color:#6A9955"># find any links to Rashi and add them to the begining of the commentaries list</span></div><div class="ln" style="left:-6.5px;top:266.65px;width:30px;color:#e0e0e0;font-weight:700;">77</div><svg style="left:24.0px;top:268.95px" width="5.4" height="5.4" viewBox="0 0 5.4 5.4"><path d="M2.7 0V5.4M0 2.7H5.4" stroke="#a0a0a0" stroke-width="0.7"/></svg><div class="row" style="left:31.799999999999955px;top:266.65px;">    <span style="color:#C586C0">for</span> <span style="color:#9CDCFE">linked_text</span> <span style="color:#C586C0">in</span> <span style="color:#9CDCFE">data</span><span style="color:#FFD700">[</span><span style="color:#CE9178">&quot;links&quot;</span><span style="color:#FFD700">]</span><span style="color:#CCCCCC">:</span></div><div class="ln" style="left:-6.5px;top:277.18px;width:30px;color:#787c82;">78</div><svg style="left:24.0px;top:279.48px" width="5.4" height="5.4" viewBox="0 0 5.4 5.4"><path d="M2.7 0V5.4M0 2.7H5.4" stroke="#a0a0a0" stroke-width="0.7"/></svg><div class="row" style="left:31.799999999999955px;top:277.18px;">        <span style="color:#C586C0">if</span> <span style="color:#9CDCFE">linked_text</span><span style="color:#FFD700">[</span><span style="color:#CE9178">&#x27;title&#x27;</span><span style="color:#FFD700">]</span> <span style="color:#CCCCCC">=</span><span style="color:#CCCCCC">=</span> <span style="color:#CE9178">&#x27;Rashi&#x27;</span><span style="color:#CCCCCC">:</span></div><div class="ln" style="left:-6.5px;top:287.71px;width:30px;color:#787c82;">79</div><svg style="left:24.0px;top:290.01px" width="5.4" height="5.4" viewBox="0 0 5.4 5.4"><path d="M2.7 0V5.4M0 2.7H5.4" stroke="#a0a0a0" stroke-width="0.7"/></svg><div class="row" style="left:31.799999999999955px;top:287.71px;">            <span style="color:#9CDCFE">commentaries</span><span style="color:#CCCCCC">.</span><span style="color:#DCDCAA">insert</span><span style="color:#FFD700">(</span><span style="color:#B5CEA8">0</span><span style="color:#CCCCCC">,</span> <span style="color:#9CDCFE">linked_text</span><span style="color:#DA70D6">[</span><span style="color:#CE9178">&#x27;ref&#x27;</span><span style="color:#DA70D6">]</span><span style="color:#FFD700">)</span></div><div class="ln" style="left:-6.5px;top:298.24px;width:30px;color:#787c82;">80</div><svg style="left:24.0px;top:300.54px" width="5.4" height="5.4" viewBox="0 0 5.4 5.4"><path d="M2.7 0V5.4M0 2.7H5.4" stroke="#a0a0a0" stroke-width="0.7"/></svg><div class="ln" style="left:-6.5px;top:308.77px;width:30px;color:#787c82;">81</div><div class="row" style="left:31.799999999999955px;top:308.77px;">    <span style="color:#6A9955"># Iterate through the &quot;links&quot; in our data response, filtering for commentary links and</span></div><div class="ln" style="left:-6.5px;top:319.30px;width:30px;color:#787c82;">82</div><div class="row" style="left:31.799999999999955px;top:319.30px;">    <span style="color:#6A9955"># appending the text reference to our commentaries list.</span></div><div class="ln" style="left:-6.5px;top:329.83px;width:30px;color:#787c82;">83</div><div class="row" style="left:31.799999999999955px;top:329.83px;">    <span style="color:#C586C0">for</span> <span style="color:#9CDCFE">linked_text</span> <span style="color:#C586C0">in</span> <span style="color:#9CDCFE">data</span><span style="color:#FFD700">[</span><span style="color:#CE9178">&quot;links&quot;</span><span style="color:#FFD700">]</span><span style="color:#CCCCCC">:</span></div><div class="ln" style="left:-6.5px;top:340.36px;width:30px;color:#787c82;">84</div><div class="row" style="left:31.799999999999955px;top:340.36px;">        <span style="color:#C586C0">if</span> <span style="color:#9CDCFE">linked_text</span><span style="color:#FFD700">[</span><span style="color:#CE9178">&#x27;type&#x27;</span><span style="color:#FFD700">]</span> <span style="color:#CCCCCC">=</span><span style="color:#CCCCCC">=</span> <span style="color:#CE9178">&#x27;commentary&#x27;</span><span style="color:#CCCCCC">:</span></div><div class="ln" style="left:-6.5px;top:350.89px;width:30px;color:#787c82;">85</div><div class="row" style="left:31.799999999999955px;top:350.89px;">            <span style="color:#9CDCFE">commentaries</span><span style="color:#CCCCCC">.</span><span style="color:#DCDCAA">append</span><span style="color:#FFD700">(</span><span style="color:#9CDCFE">linked_text</span><span style="color:#DA70D6">[</span><span style="color:#CE9178">&#x27;ref&#x27;</span><span style="color:#DA70D6">]</span><span style="color:#FFD700">)</span></div><div class="ln" style="left:-6.5px;top:361.42px;width:30px;color:#787c82;">86</div><div class="ln" style="left:-6.5px;top:371.95px;width:30px;color:#787c82;">87</div><div class="row" style="left:31.799999999999955px;top:371.95px;">    <span style="color:#9CDCFE">com1_title</span><span style="color:#CCCCCC">,</span> <span style="color:#9CDCFE">com1_text</span> <span style="color:#CCCCCC">=</span> <span style="color:#DCDCAA">get_commentary_text</span><span style="color:#FFD700">(</span><span style="color:#9CDCFE">commentaries</span><span style="color:#DA70D6">[</span><span style="color:#B5CEA8">0</span><span style="color:#DA70D6">]</span><span style="color:#FFD700">)</span></div><div class="ln" style="left:-6.5px;top:382.48px;width:30px;color:#787c82;">88</div><div class="row" style="left:31.799999999999955px;top:382.48px;">    <span style="color:#9CDCFE">com2_title</span><span style="color:#CCCCCC">,</span> <span style="color:#9CDCFE">com2_text</span> <span style="color:#CCCCCC">=</span> <span style="color:#DCDCAA">get_commentary_text</span><span style="color:#FFD700">(</span><span style="color:#9CDCFE">commentaries</span><span style="color:#DA70D6">[</span><span style="color:#B5CEA8">1</span><span style="color:#DA70D6">]</span><span style="color:#FFD700">)</span></div><div class="ln" style="left:-6.5px;top:393.01px;width:30px;color:#787c82;">89</div><div class="row" style="left:31.799999999999955px;top:393.01px;">    <span style="color:#9CDCFE">com3_title</span><span style="color:#CCCCCC">,</span> <span style="color:#9CDCFE">com3_text</span> <span style="color:#CCCCCC">=</span> <span style="color:#DCDCAA">get_commentary_text</span><span style="color:#FFD700">(</span><span style="color:#9CDCFE">commentaries</span><span style="color:#DA70D6">[</span><span style="color:#B5CEA8">2</span><span style="color:#DA70D6">]</span><span style="color:#FFD700">)</span></div><div class="ln" style="left:-6.5px;top:403.54px;width:30px;color:#787c82;">90</div><div class="ln" style="left:-6.5px;top:414.07px;width:30px;color:#787c82;">91</div><div class="row" style="left:31.799999999999955px;top:414.07px;">    <span style="color:#6A9955">##################################################################</span></div><div class="ln" style="left:-6.5px;top:424.60px;width:30px;color:#787c82;">92</div><div class="ln" style="left:-6.5px;top:435.13px;width:30px;color:#787c82;">93</div><div class="row" style="left:31.799999999999955px;top:435.13px;">    <span style="color:#6A9955"># Step Five: Print Parasha Outline</span></div><div class="ln" style="left:-6.5px;top:445.66px;width:30px;color:#787c82;">94</div><div class="ln" style="left:-6.5px;top:456.19px;width:30px;color:#787c82;">95</div><div class="row" style="left:31.799999999999955px;top:456.19px;">    <span style="color:#DCDCAA">print</span><span style="color:#FFD700">(</span><span style="color:#569CD6">f</span><span style="color:#CE9178">&quot;My Outline for Parashat </span><span style="color:#C586C0">{</span><span style="color:#9CDCFE">parasha_name</span><span style="color:#C586C0">}</span><span style="color:#CE9178">&quot;</span><span style="color:#FFD700">)</span></div><div class="ln" style="left:-6.5px;top:466.72px;width:30px;color:#787c82;">96</div><div class="row" style="left:31.799999999999955px;top:466.72px;">    <span style="color:#DCDCAA">print</span><span style="color:#FFD700">(</span><span style="color:#569CD6">f</span><span style="color:#CE9178">&quot;Hebrew: </span><span style="color:#C586C0">{</span><span style="color:#9CDCFE">he_pasuk</span><span style="color:#C586C0">}</span><span style="color:#CE9178"> (edition: </span><span style="color:#C586C0">{</span><span style="color:#9CDCFE">he_vtitle</span><span style="color:#C586C0">}</span><span style="color:#CE9178">)&quot;</span><span style="color:#FFD700">)</span></div><div class="ln" style="left:-6.5px;top:477.25px;width:30px;color:#787c82;">97</div><div class="row" style="left:31.799999999999955px;top:477.25px;">    <span style="color:#DCDCAA">print</span><span style="color:#FFD700">(</span><span style="color:#569CD6">f</span><span style="color:#CE9178">&quot;English: </span><span style="color:#C586C0">{</span><span style="color:#9CDCFE">en_pasuk</span><span style="color:#C586C0">}</span><span style="color:#CE9178"> (edition: </span><span style="color:#C586C0">{</span><span style="color:#9CDCFE">en_vtitle</span><span style="color:#C586C0">}</span><span style="color:#CE9178">)&quot;</span><span style="color:#FFD700">)</span></div><div class="ln" style="left:-6.5px;top:487.78px;width:30px;color:#787c82;">98</div><div class="row" style="left:31.799999999999955px;top:487.78px;">    <span style="color:#DCDCAA">print</span><span style="color:#FFD700">(</span><span style="color:#CE9178">&quot;</span><span style="color:#D7BA7D">\n</span><span style="color:#CE9178">Three Commentaries:&quot;</span><span style="color:#FFD700">)</span></div><div class="ln" style="left:-6.5px;top:498.31px;width:30px;color:#787c82;">99</div><div class="row" style="left:31.799999999999955px;top:498.31px;">    <span style="color:#DCDCAA">print</span><span style="color:#FFD700">(</span><span style="color:#569CD6">f</span><span style="color:#CE9178">&quot;A) </span><span style="color:#C586C0">{</span><span style="color:#9CDCFE">com1_title</span><span style="color:#C586C0">}</span><span style="color:#CE9178">: </span><span style="color:#C586C0">{</span><span style="color:#9CDCFE">com1_text</span><span style="color:#C586C0">}</span><span style="color:#D7BA7D">\n</span><span style="color:#CE9178">&quot;</span><span style="color:#FFD700">)</span></div><div class="ln" style="left:-6.5px;top:508.84px;width:30px;color:#787c82;">100</div><div class="row" style="left:31.799999999999955px;top:508.84px;">    <span style="color:#DCDCAA">print</span><span style="color:#FFD700">(</span><span style="color:#569CD6">f</span><span style="color:#CE9178">&quot;B) </span><span style="color:#C586C0">{</span><span style="color:#9CDCFE">com2_title</span><span style="color:#C586C0">}</span><span style="color:#CE9178">: </span><span style="color:#C586C0">{</span><span style="color:#9CDCFE">com2_text</span><span style="color:#C586C0">}</span><span style="color:#D7BA7D">\n</span><span style="color:#CE9178">&quot;</span><span style="color:#FFD700">)</span></div><div class="ln" style="left:-6.5px;top:519.37px;width:30px;color:#787c82;">101</div><div class="row" style="left:31.799999999999955px;top:519.37px;">    <span style="color:#DCDCAA">print</span><span style="color:#FFD700">(</span><span style="color:#569CD6">f</span><span style="color:#CE9178">&quot;C) </span><span style="color:#C586C0">{</span><span style="color:#9CDCFE">com3_title</span><span style="color:#C586C0">}</span><span style="color:#CE9178">: </span><span style="color:#C586C0">{</span><span style="color:#9CDCFE">com3_text</span><span style="color:#C586C0">}</span><span style="color:#CE9178">&quot;</span><span style="color:#FFD700">)</span></div><div class="ln" style="left:-6.5px;top:529.90px;width:30px;color:#787c82;">102</div></div><div class="a" style="left:252px;top:39px;width:772px;height:1px;background:#191919"></div><div class="a" style="left:600px;top:39px;width:1px;height:574px;background:rgba(0,0,0,0.35)"></div><div class="a" style="left:600.5px;top:39.5px;width:9px;height:2px;background:#3a3a3a"></div><div class="a" style="left:609.2px;top:39px;width:1.6px;height:574px;background:#161616"></div><div class="a" style="left:628px;top:39px;width:1px;height:574px;background:#161616"></div><div class="a" style="left:999px;top:39px;width:1px;height:574px;background:rgba(0,0,0,0.35)"></div><div class="a" style="left:618.6px;top:305px;width:1px;height:42.5px;background:#3a3a3a"></div><div class="a" style="left:613.4px;top:321.5px;width:11.2px;height:9.9px;border-radius:2px;background:#2a2c2f"></div><svg style="left:615.0px;top:322.4px" width="8" height="8" viewBox="0 0 8 8"><path d="M0.5 4H7.3M4.6 1.3L7.3 4 4.6 6.7" fill="none" stroke="#d0d0d0" stroke-width="0.7"/></svg><div class="a" style="left:1007.5px;top:229px;width:16.5px;height:200px;background:#464646"></div><div class="a" style="left:1016.4px;top:320.6px;width:7.6px;height:14.8px;background:#657347"></div><div class="a" style="left:1007.5px;top:332px;width:8.9px;height:3.4px;background:#8e3a47"></div><div class="a" style="left:1000px;top:320.3px;width:7.5px;height:1.6px;background:#bcbcbc"></div><div class="a" style="left:252px;top:613px;width:772px;height:186px;background:#191919;border-top:1px solid #272727"></div><div class="t" style="left:262.8px;top:622px;font-size:6.4px;color:#9d9d9d">PROBLEMS</div><div class="t" style="left:312.2px;top:622px;font-size:6.4px;color:#e7e7e7">OUTPUT</div><div class="t" style="left:353.3px;top:622px;font-size:6.4px;color:#9d9d9d">DEBUG CONSOLE</div><div class="t" style="left:423px;top:622px;font-size:6.4px;color:#9d9d9d">TERMINAL</div><div class="t" style="left:469.4px;top:622px;font-size:6.4px;color:#9d9d9d">PORTS</div><div class="t" style="left:505px;top:622px;font-size:6.4px;color:#9d9d9d">AZURE</div><div class="t" style="left:540.9px;top:622px;font-size:6.4px;color:#9d9d9d">COMMENTS</div><div class="t" style="left:592.9px;top:622px;font-size:6.4px;color:#9d9d9d">POLYGLOT NOTEBOOK</div><div class="a" style="left:311px;top:629.5px;width:29.3px;height:1px;background:#0078d4"></div><div class="a" style="left:842.3px;top:619px;width:99.6px;height:11px;background:#313131;border-radius:3px"></div><div class="t" style="left:847.9px;top:621.9px;font-size:6.78px;color:#cccccc">C/C++ Configuration Warn</div><svg style="left:930.0px;top:620.5px" width="8" height="8" viewBox="0 0 8 8"><path d="M1 2.5L4 5.5 7 2.5" fill="none" stroke="#cccccc" stroke-width="0.8"/></svg><svg style="left:945.5px;top:619.5px" width="10" height="10" viewBox="0 0 11 11"><path d="M1 2H9M1 4.5H9M1 7H5M1 9.5H5M6.5 7L9.5 10M9.5 7L6.5 10" fill="none" stroke="#cccccc" stroke-width="0.8"/></svg><svg style="left:961.0px;top:619.5px" width="10" height="10" viewBox="0 0 10 10"><rect x="1.5" y="4.5" width="7" height="5" rx="1" fill="none" stroke="#cccccc" stroke-width="0.8"/><path d="M3 4.5V3C3 0.8 7 0.8 7 3V4.5" fill="none" stroke="#cccccc" stroke-width="0.8"/></svg><svg style="left:976px;top:623.8px" width="10" height="2" viewBox="0 0 10 2"><circle cx="1.8" cy="1" r="0.65" fill="#cccccc"/><circle cx="5" cy="1" r="0.65" fill="#cccccc"/><circle cx="8.2" cy="1" r="0.65" fill="#cccccc"/></svg><svg style="left:991.8px;top:620.0px" width="9" height="9" viewBox="0 0 9 9"><path d="M1 6L4.5 2.5 8 6" fill="none" stroke="#cccccc" stroke-width="0.8"/></svg><svg style="left:1006.7px;top:620.0px" width="9" height="9" viewBox="0 0 9 9"><path d="M1 1L8 8M8 1L1 8" fill="none" stroke="#cccccc" stroke-width="0.8"/></svg><div class="row" style="left:263.5px;top:634.60px"><span style="color:#FFD700">[</span><span style="color:#B5CEA8">12/20/2024, 5:09:30 PM</span><span style="color:#FFD700">]</span><span style="color:#cccccc"> For C source files, IntelliSenseMode was changed from </span><span style="color:#CE9178">&quot;macos-clang-x64&quot;</span><span style="color:#cccccc"> to </span><span style="color:#CE9178">&quot;macos-clang-arm64&quot;</span><span style="color:#cccccc"> based on compiler args and querying compilerPath: </span><span style="color:#CE9178">&quot;/usr/</span><span style="color:#cccccc"></span></div><div class="row" style="left:263.5px;top:645.10px"><span style="color:#CE9178">bin/clang&quot;</span></div><div class="row" style="left:263.5px;top:655.60px"><span style="color:#FFD700">[</span><span style="color:#B5CEA8">12/20/2024, 5:09:30 PM</span><span style="color:#FFD700">]</span><span style="color:#cccccc"> For C++ source files, IntelliSenseMode was changed from </span><span style="color:#CE9178">&quot;macos-clang-x64&quot;</span><span style="color:#cccccc"> to </span><span style="color:#CE9178">&quot;macos-clang-arm64&quot;</span><span style="color:#cccccc"> based on compiler args and querying compilerPath: </span><span style="color:#CE9178">&quot;/</span><span style="color:#cccccc"></span></div><div class="row" style="left:263.5px;top:666.10px"><span style="color:#CE9178">usr/bin/clang&quot;</span></div><div class="a" style="left:1017px;top:634px;width:1px;height:164px;background:#141414"></div><div class="a" style="left:1018px;top:634px;width:6px;height:1px;background:#3a3a3a"></div><div class="a" style="left:0;top:798.5px;width:1024px;height:12.5px;background:#191919;border-top:1px solid #202020"></div><div class="a" style="left:0;top:799px;width:20px;height:12px;background:#0078d4"></div><svg style="left:5.0px;top:801.25px" width="10" height="7.5" viewBox="0 0 10 7.5"><path d="M2.2 1.5L4.6 3.6 2.6 6M7.8 1.5L5.4 3.6 7.4 6" fill="none" stroke="#ffffff" stroke-width="0.8"/></svg><svg style="left:24.0px;top:800.5px" width="9" height="9" viewBox="0 0 9 9"><circle cx="4.5" cy="4.5" r="3.6" fill="none" stroke="#cccccc" stroke-width="0.8"/><path d="M3.3 3.3L5.7 5.7M5.7 3.3L3.3 5.7" stroke="#cccccc" stroke-width="0.6"/></svg><div class="t" style="left:34.6px;top:801.8px;font-size:7.3px;color:#cccccc">0</div><svg style="left:40.5px;top:800.5px" width="9" height="9" viewBox="0 0 9 9"><path d="M4.5 0.8L8.3 8H0.7Z" fill="none" stroke="#cccccc" stroke-width="0.8"/><path d="M4.5 3.3V5.5M4.5 6.3V7" fill="none" stroke="#cccccc" stroke-width="0.8"/></svg><div class="t" style="left:51.3px;top:801.8px;font-size:7.3px;color:#cccccc">0</div><svg style="left:64.5px;top:800.5px" width="9" height="9" viewBox="0 0 9 9"><path d="M4.5 4V8.5M2 1.5C0.8 2.8 0.8 5 2 6.3M7 1.5C8.2 2.8 8.2 5 7 6.3M3.2 2.7C2.6 3.4 2.6 4.4 3.2 5.1M5.8 2.7C6.4 3.4 6.4 4.4 5.8 5.1" fill="none" stroke="#cccccc" stroke-width="0.8"/></svg><div class="t" style="left:75px;top:801.8px;font-size:7.3px;color:#cccccc">0</div><div class="t" style="left:89px;top:801.8px;font-size:7.3px;color:#cccccc">AWS</div><svg style="left:113.25px;top:802.3px" width="9.5" height="6" viewBox="0 0 9.5 6"><path d="M2.3 5.2H6.8C7.8 5.2 8.3 4.6 8.3 3.9 8.3 3.2 7.7 2.7 7 2.7 6.8 1.6 6 1 5 1 4 1 3.2 1.7 3 2.7 2 2.7 1.3 3.2 1.3 4 1.3 4.7 1.8 5.2 2.3 5.2Z" fill="none" stroke="#cccccc" stroke-width="0.8"/></svg><div class="t" style="left:124.6px;top:801.8px;font-size:7.3px;color:#cccccc">Cloud Code - No Project</div><div class="t" style="left:596.2px;top:801.8px;font-size:7.3px;color:#cccccc">AzureOpenAI: Completion</div><div class="t" style="left:692.8px;top:801.8px;font-size:7.3px;color:#cccccc">Ln 77, Col 1</div><div class="t" style="left:742.2px;top:801.8px;font-size:7.3px;color:#cccccc">Spaces: 4</div><div class="t" style="left:784.7px;top:801.8px;font-size:7.3px;color:#cccccc">UTF-8</div><div class="t" style="left:815.2px;top:801.8px;font-size:7.3px;color:#cccccc">LF</div><div class="t" style="left:843px;top:801.8px;font-size:7.3px;color:#cccccc">Python</div><div class="t" style="left:874.9px;top:801.8px;font-size:7.3px;color:#cccccc">3.13.0 64-bit</div><div class="t" style="left:974.8px;top:801.8px;font-size:7.3px;color:#cccccc">Prettier</div><div class="t" style="left:832.5px;top:801.8px;font-size:6.5px;color:#cccccc">{}</div><svg style="left:927.9px;top:800.5px" width="10" height="9" viewBox="0 0 10 9"><path d="M1 5.5C1 3.8 1.5 3 2.2 2.6 2 1.4 2.7 0.7 3.7 0.8 4.4 0.9 4.8 1.2 5 1.6 5.2 1.2 5.6 0.9 6.3 0.8 7.3 0.7 8 1.4 7.8 2.6 8.5 3 9 3.8 9 5.5 9 7.2 7.2 8 5 8 2.8 8 1 7.2 1 5.5Z" fill="none" stroke="#cccccc" stroke-width="0.8"/><path d="M3 5H7" fill="none" stroke="#cccccc" stroke-width="0.8"/></svg><svg style="left:946.0px;top:800.5px" width="9" height="9" viewBox="0 0 9 9"><path d="M4.5 0.5C4.8 2.8 6.2 4.2 8.5 4.5 6.2 4.8 4.8 6.2 4.5 8.5 4.2 6.2 2.8 4.8 0.5 4.5 2.8 4.2 4.2 2.8 4.5 0.5Z" fill="#cccccc"/></svg><svg style="left:963.5px;top:800.5px" width="9" height="9" viewBox="0 0 9 9"><path d="M0.8 5L2.5 6.8 6 2.5M4 6.3L4.5 6.8 8 2.5" fill="none" stroke="#cccccc" stroke-width="0.8"/></svg><svg style="left:1007.5px;top:800.5px" width="9" height="9" viewBox="0 0 9 9"><path d="M2 7V4.5C2 2.8 3.2 1.5 4.5 1.5 5.8 1.5 7 2.8 7 4.5V7H8V7.8H1V7Z" fill="none" stroke="#cccccc" stroke-width="0.8"/><circle cx="7.5" cy="2" r="1.6" fill="#cccccc"/></svg></div></body></html>
